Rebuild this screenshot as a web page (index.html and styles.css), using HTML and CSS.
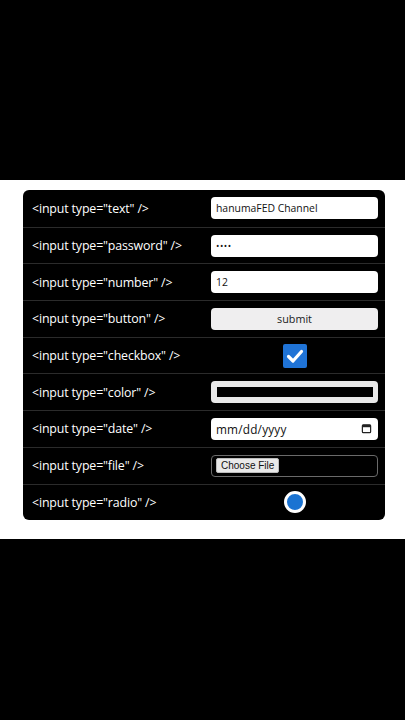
FILE: index.html
```html
<!DOCTYPE html>
<html>
<head>
<meta charset="utf-8">
<link rel="stylesheet" href="styles.css">
</head>
<body>
<div class="band">
  <div class="card">
    <div class="row"><span class="label">&lt;input type="text" /&gt;</span><div class="cell"><input class="field" type="text" value="hanumaFED Channel"></div></div>
    <div class="row"><span class="label">&lt;input type="password" /&gt;</span><div class="cell"><input class="field pw" type="password" value="1234"></div></div>
    <div class="row"><span class="label">&lt;input type="number" /&gt;</span><div class="cell"><input class="field" type="text" value="12"></div></div>
    <div class="row"><span class="label">&lt;input type="button" /&gt;</span><div class="cell"><input class="btn" type="button" value="submit"></div></div>
    <div class="row"><span class="label">&lt;input type="checkbox" /&gt;</span><div class="cell center"><span class="check"><svg viewBox="0 0 24 24" width="24" height="24"><path d="M5.5 12.5 L10 17 L18.5 7.5" fill="none" stroke="#fff" stroke-width="3.2" stroke-linecap="round" stroke-linejoin="round"/></svg></span></div></div>
    <div class="row"><span class="label">&lt;input type="color" /&gt;</span><div class="cell"><div class="color"><div class="swatch"></div></div></div></div>
    <div class="row"><span class="label">&lt;input type="date" /&gt;</span><div class="cell"><div class="field date"><span class="dtext">mm/dd/yyyy</span><svg viewBox="0 0 12 12" width="11" height="11"><rect x="1.5" y="2" width="9" height="8.5" rx="1" fill="none" stroke="#222" stroke-width="1.3"/><rect x="1.5" y="2" width="9" height="2.6" fill="#222"/></svg></div></div></div>
    <div class="row"><span class="label">&lt;input type="file" /&gt;</span><div class="cell"><div class="file"><span class="choose">Choose File</span></div></div></div>
    <div class="row"><span class="label">&lt;input type="radio" /&gt;</span><div class="cell center"><span class="radio"></span></div></div>
  </div>
</div>
</body>
</html>
```
FILE: styles.css
```css
html, body {
  margin: 0;
  padding: 0;
  background: #000;
  font-family: "Open Sans", "Noto Sans", sans-serif;
}
.band {
  margin-top: 180px;
  background: #fff;
  padding: 10px 20px 19px 23px;
}
.card {
  background: #000;
  border-radius: 6px;
  overflow: hidden;
}
.row {
  display: grid;
  grid-template-columns: 1fr 167px;
  align-items: center;
  height: 36.7px;
  box-sizing: border-box;
  padding: 0 7px 0 9px;
  border-top: 1px solid #2b2b2b;
}
.row:first-child { border-top: none; }
.label {
  color: #fff;
  font-size: 12.4px;
  font-weight: 500;
  letter-spacing: -0.15px;
}
.cell { display: flex; align-items: center; }
.cell.center { justify-content: center; }
.field {
  width: 100%;
  height: 22px;
  box-sizing: border-box;
  border: none;
  border-radius: 4px;
  background: #fff;
  padding: 0 5px;
  font-family: "Open Sans", "Noto Sans", sans-serif;
  font-size: 10.4px;
  color: #111;
  outline: none;
}
.field.pw { font-size: 9px; letter-spacing: 0.5px; }
.btn {
  width: 100%;
  height: 22px;
  border: none;
  border-radius: 4px;
  background: #efeeef;
  font-family: "Open Sans", "Noto Sans", sans-serif;
  font-size: 10.8px;
  color: #222;
}
.check {
  width: 24px;
  height: 24px;
  border-radius: 2px;
  background: #1f73d6;
  display: flex;
}
.color {
  width: 100%;
  height: 22px;
  box-sizing: border-box;
  background: #e8e8e8;
  border-radius: 4px;
  padding: 6px 5px 6px 6px;
}
.swatch { height: 100%; background: #000; }
.date {
  display: flex;
  align-items: center;
  justify-content: space-between;
  padding: 0 6px 0 5px;
}
.dtext { font-size: 11.8px; color: #111; letter-spacing: 0.2px; }
.file {
  width: 100%;
  height: 22px;
  box-sizing: border-box;
  border: 1px solid #6a6a6a;
  border-radius: 4px;
  display: flex;
  align-items: center;
  padding-left: 4px;
}
.choose {
  font-family: "Liberation Sans", Arial, sans-serif;
  font-size: 10px;
  color: #111;
  background: #e9e9e9;
  border: 1px solid #bbb;
  border-radius: 2px;
  padding: 1px 4px;
}
.radio {
  width: 22px;
  height: 22px;
  box-sizing: border-box;
  border-radius: 50%;
  border: 3.5px solid #fff;
  background: #1a73d2;
}
```
